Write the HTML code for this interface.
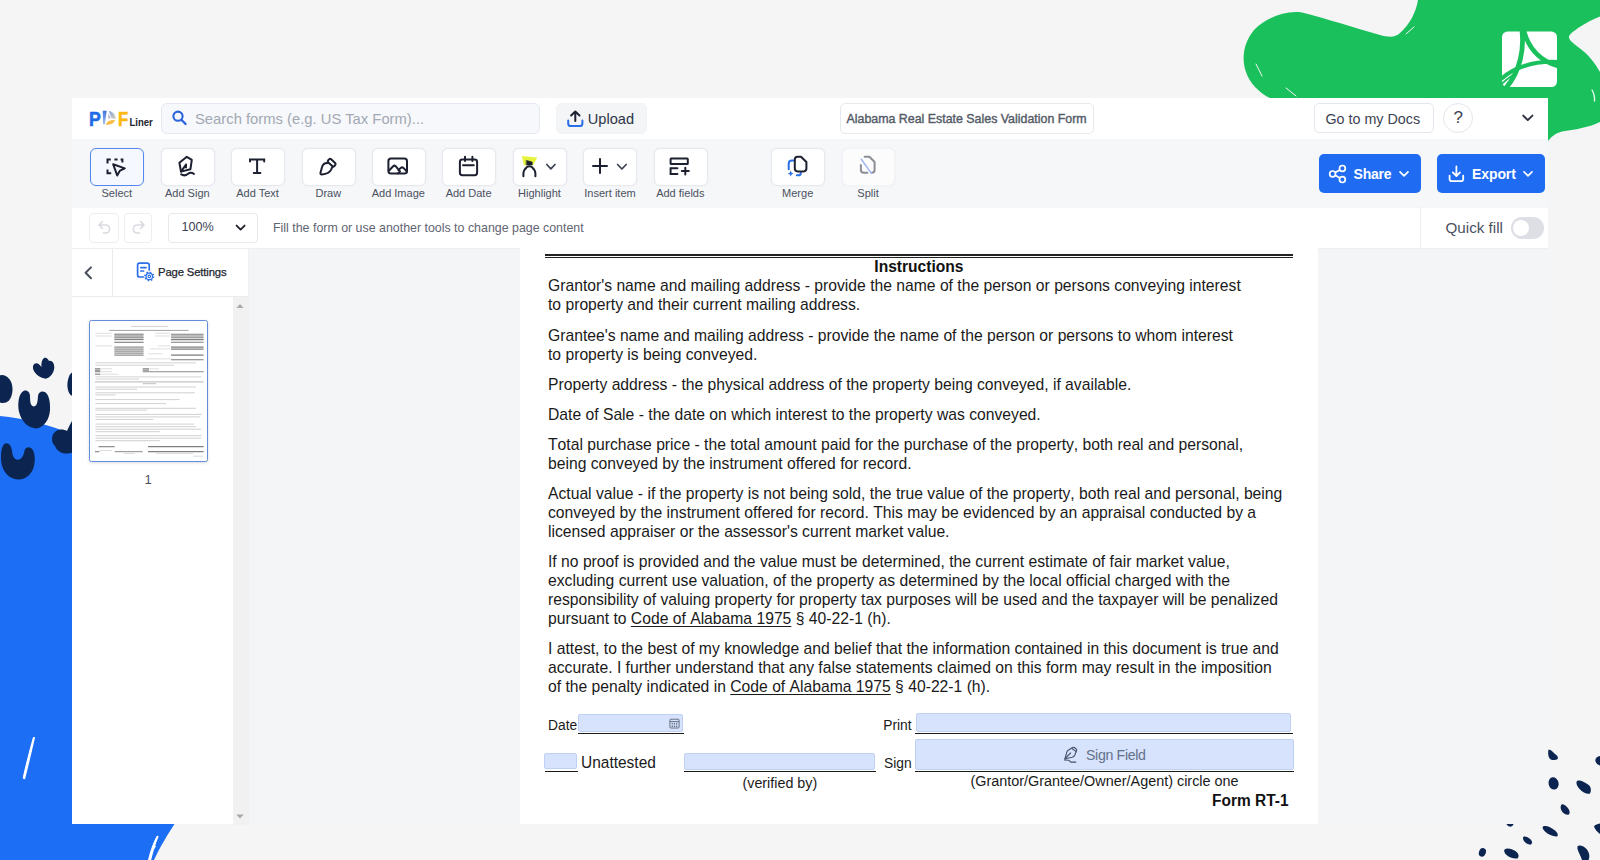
<!DOCTYPE html>
<html lang="en">
<head>
<meta charset="utf-8">
<title>PDFLiner - Alabama Real Estate Sales Validation Form</title>
<style>
*{box-sizing:border-box;margin:0;padding:0}
html,body{width:1600px;height:860px;overflow:hidden}
body{background:#f5f5f5;font-family:"Liberation Sans",sans-serif;color:#3b4252;position:relative}
.abs{position:absolute}
#bg{position:absolute;left:0;top:0;width:1600px;height:860px}
#win{position:absolute;left:71.5px;top:97.5px;width:1476.5px;height:726.5px;background:#f3f5f7;overflow:hidden}
#hdr{position:absolute;left:71.5px;top:97.5px;width:1476.5px;height:41.5px;background:#fff}
#tb{position:absolute;left:71.5px;top:139px;width:1476.5px;height:68px;background:#f6f7f9}
#sub{position:absolute;left:71.5px;top:207.5px;width:1476.5px;height:41.5px;background:#fff;border-bottom:1px solid #eceef1}
.t{position:absolute;white-space:nowrap;line-height:1}
.box{position:absolute;border:1px solid #e4e7ec;border-radius:5px;background:#fff}
.tbtn{position:absolute;top:148px;width:54px;height:37.5px;border:1px solid #e7e9ed;border-radius:6px;background:#fff;box-shadow:0 0 2px rgba(30,40,80,.07)}
.tbtn.sel{border:1px solid #5588ee;background:#f5f9ff}
.tlbl{position:absolute;top:187.4px;width:90px;text-align:center;font-size:11px;color:#4a5160;line-height:13px}
.tbtn svg{position:absolute;left:-1.2px;top:-0.8px}

#page{position:absolute;left:520px;top:248px;width:798px;height:576px;background:#fff}
.p{position:absolute;left:548px;width:760px;font-size:15.69px;line-height:19px;color:#1a1a1a;white-space:nowrap;font-kerning:none}
.u{text-decoration:underline;text-decoration-thickness:1px;text-underline-offset:2px}
.fld{position:absolute;background:#d7e3fc;border:1px solid #bfd0f5;border-radius:2px}
.ln{position:absolute;height:1.5px;background:#1a1a1a}
.d{position:absolute;white-space:nowrap;line-height:1;color:#1a1a1a}
</style>
</head>
<body>
<svg id="bg" viewBox="0 0 1600 860">
<!-- green blob -->
<path d="M1418 0 C1416 12 1410 24 1400 33 C1395 38 1388 37 1380 35 C1355 28 1328 19 1302 12.5 C1285 10 1266 18 1254 30 C1244 42 1241 58 1246 72 C1250 84 1260 94 1274 100 L1548 100 L1548 141 C1552 136 1556 133 1562 131.5 C1574 130 1590 127 1600 122 L1600 72 C1595 63 1588 54 1578 47 C1573 43 1569 40 1569 37 C1569 34 1573 32 1578 28 C1586 23 1593 19 1600 16.5 L1600 0 Z" fill="#19c05c"/>
<path d="M1256 64 L1262 76 M1286 88 L1296 96 M1406 34 L1414 27" stroke="#f5f5f5" stroke-width="1" stroke-linecap="round" fill="none"/>
<path d="M1592 90 Q1595 95 1594.5 101" stroke="#e9f7ee" stroke-width="1.4" stroke-linecap="round" fill="none"/>
<!-- pdf icon -->
<rect x="1502" y="31.6" width="55" height="55.4" rx="5.5" fill="#fff"/>
<g fill="none" stroke="#19c05c" stroke-linecap="butt">
<path d="M1522 31 C1524 48 1521 70 1506 88" stroke-width="4.8"/>
<path d="M1524 31 C1528 46 1538 60 1558 66" stroke-width="4.6"/>
<path d="M1501 79 C1516 66 1536 61 1558 62" stroke-width="4"/>
<path d="M1501.5 84 C1506 80 1511 76 1516 73" stroke-width="2"/>
</g>
<!-- blue blob -->
<path d="M0 416 C24 418 50 425 72 434 L72 824 L174.5 824 C168 834 160 847 154 860 L0 860 Z" fill="#1c6ef5"/>
<path d="M34.4 737.5 Q30 757 24.6 778.5 Q23.2 779 23.6 776.5 Q28 757 33.4 737.8 Z" fill="#fff" stroke="#fff" stroke-width="1.2" stroke-linejoin="round"/>
<path d="M158 836.5 Q154 846 150.5 860 L148.6 860 Q152 846 157.2 836.4 Z M153 850 L155.6 846" fill="#fff" stroke="#fff" stroke-width="1.2" stroke-linejoin="round"/>
<!-- navy blobs left -->
<g fill="#0b2550">
<path d="M44 358 C46 357 48 358.5 49 361 C52 360 54.5 363.5 54.3 367.5 C54 373 50 378 45.5 378.7 C41 378 35.5 375 33.5 370 C32 366 34 362.5 37.5 363.5 C39 364 40.5 365.5 41.5 367 C41 363 42 359.5 44 358 Z"/>
<path d="M0 375.5 C4 374 9 377 11.5 383 C13.5 389 12.5 396 9 400.5 C6.5 403 3 403.6 0 402.5 Z"/>
<path d="M23.5 391 C27 389.5 29.8 392 30 396 C30.2 401 30 406 33.8 406.4 C37.8 406 37.6 400 38 396 C38.5 392 41.5 390.5 45 392 C49 394.5 50.4 402 50 410 C49.5 419 44.5 427 37 428.4 C28 428.6 21 421 18.8 411 C17.5 402 19 393.5 23.5 391 Z"/>
<path d="M72 372.6 C69.5 374 67.5 379 67.4 385 C67.4 390 69 394.5 72 395.8 Z"/>
<path d="M72 421 C70 424 68.5 428 67 431 C63 428.5 57 429 54 433 C51 437 51.5 443 55 446 C57 451 62 454 67 453.5 C69 453.5 70.5 453.2 72 452.8 Z"/>
<path d="M5 443.5 C9 442.6 11.5 446 12 451 C12.6 456 14 459.5 18 459.8 C22 459.5 23.6 455 24.4 451 C25.2 447.5 28 446.4 31 448 C35 451 35.6 459 34 466 C32 474 26 479.5 19 479.5 C10 479.5 3 473 1.4 463 C0.4 455 1.2 445.5 5 443.5 Z"/>
</g>
<!-- navy dots right bottom -->
<g fill="#0b2550">
<path d="M1548.6 749.5 C1551 749.5 1553 752 1555 754 C1557.5 755.5 1558.6 757.5 1557.6 759 C1555.5 760.5 1551.5 760.6 1549.6 758.6 C1548 756 1547.8 752 1548.6 749.5 Z"/>
<path d="M1600 756 C1597 756.5 1595 758.5 1595.4 761 C1596 763.5 1598 765 1600 765.6 Z"/>
<ellipse cx="1553.6" cy="783.4" rx="5" ry="6.2" transform="rotate(-12 1553.6 783.4)"/>
<path d="M1577 781 C1580 779.5 1584 782 1588 784.5 C1591 786.5 1591.6 790 1590 793.6 C1587 794.6 1582.6 792.4 1579.6 789 C1577 786 1575.6 783 1577 781 Z"/>
<path d="M1561.6 804.5 C1563.6 803.5 1566.6 806 1568.6 809 C1570 811.5 1570 814 1568.4 814.8 C1565.6 815 1562.4 813 1561.2 810 C1560.4 808 1560.4 805.6 1561.6 804.5 Z"/>
<path d="M1506.5 824 L1513.5 824 C1513 826 1511 827 1509.6 826.6 C1508 826.2 1506.8 825.2 1506.5 824 Z"/>
<path d="M1543 826.5 C1546 825 1551 827.5 1555 830.5 C1558 833 1558.6 836 1556.6 836.4 C1553 836.6 1548 834.5 1545 831.5 C1543 829.5 1542 827.5 1543 826.5 Z"/>
<path d="M1600 823.5 C1597 824 1594.4 825 1594 826.5 C1595 829.5 1597.6 832.5 1600 834 Z"/>
<path d="M1523.4 837 C1525 835.8 1528 837.4 1530.6 839.4 C1532.4 841 1532.4 843 1531 844.6 C1529 845 1526 843.6 1524.4 841.6 C1523 839.8 1522.6 838 1523.4 837 Z"/>
<ellipse cx="1482.4" cy="852.4" rx="3.4" ry="4.4" transform="rotate(20 1482.4 852.4)"/>
<path d="M1504.6 849.5 C1507 847.5 1512 848.8 1516 851.6 C1518.6 853.6 1519.4 856.4 1517.6 858.4 C1514 859 1509 857.6 1506 854.6 C1504.4 852.8 1503.6 850.8 1504.6 849.5 Z"/>
<path d="M1577.6 846 C1580 844.6 1584 846 1587 849.6 C1589.6 853 1590 857 1588.6 860 L1582 860 C1580.6 856 1578 851.4 1577.4 848.6 Z"/>
</g>
</svg>
<div id="win"></div>
<div id="hdr"></div>
<div id="tb"></div>
<div id="sub"></div>
<!--HEADER-->
<svg class="abs" style="left:86px;top:104px" width="72" height="28" viewBox="86 104 72 28">
  <text x="89" y="125.7" font-family="Liberation Sans, sans-serif" font-weight="bold" font-size="21.1" fill="#1f6ae6" stroke="#1f6ae6" stroke-width="0.6" stroke-linejoin="round" textLength="11.8" lengthAdjust="spacingAndGlyphs">P</text>
  <defs><linearGradient id="lg1" x1="0" y1="0" x2="0" y2="1"><stop offset="0" stop-color="#3d72dc"/><stop offset="1" stop-color="#a9c2f2"/></linearGradient><linearGradient id="lg2" x1="0" y1="0" x2="1" y2="1"><stop offset="0" stop-color="#7fa3e6"/><stop offset="1" stop-color="#dccfae"/></linearGradient></defs>
  <path d="M102.8 110.8 L106.7 110.8 L104.9 124.3 L103 124.3 Z" fill="url(#lg1)"/>
  <path d="M108.2 113.4 L111 118 L108.2 118.8 Z" fill="#b7bfcb"/>
  <path d="M108.7 110.9 C112.6 111.4 115.7 114.6 115.7 118.9 L111.6 118.3 Z" fill="url(#lg2)"/>
  <path d="M105.6 124.4 C107.4 121 111 119.6 114.9 120.1 C114.4 123.2 110.4 125.8 105.6 124.4 Z" fill="#f6bc46"/>
  <text x="117.9" y="125.7" font-family="Liberation Sans, sans-serif" font-weight="bold" font-size="21.1" fill="#fdb913" stroke="#fdb913" stroke-width="0.6" stroke-linejoin="round" textLength="10.2" lengthAdjust="spacingAndGlyphs">F</text>
  <text x="129.4" y="125.9" font-family="Liberation Sans, sans-serif" font-weight="bold" font-size="10.4" fill="#23262f" textLength="23.4" lengthAdjust="spacingAndGlyphs">Liner</text>
</svg>
<div class="box" style="left:161px;top:103.2px;width:379px;height:30.6px;background:#f6f8fc;border-color:#e3e8f1;border-radius:6px"></div>
<svg class="abs" style="left:170px;top:108px" width="20" height="20" viewBox="0 0 20 20"><circle cx="8" cy="8.2" r="4.6" fill="none" stroke="#2a63dc" stroke-width="2.1"/><path d="M11.4 11.7 L15.6 16" stroke="#2a63dc" stroke-width="2.3" stroke-linecap="round"/></svg>
<div class="t" style="left:195px;top:111.9px;font-size:14.8px;color:#a3a8b3">Search forms (e.g. US Tax Form)...</div>
<div class="box" style="left:556px;top:102.5px;width:90.5px;height:31.5px;background:#f4f5f7;border-color:#f2f3f5;border-radius:6px"></div>
<svg class="abs" style="left:565px;top:108px" width="20" height="20" viewBox="0 0 20 20" fill="none" stroke-width="2" stroke-linecap="round" stroke-linejoin="round"><path d="M3.2 12.4 V15.4 Q3.2 18.1 5.9 18.1 H14.7 Q17.4 18.1 17.4 15.4 V12.4" stroke="#2a6fe8"/><path d="M10.3 13 V3.9 M6.1 7.5 L10.3 3.5 L14.5 7.5" stroke="#1d2233"/></svg>
<div class="t" style="left:587.8px;top:111.8px;font-size:14.6px;color:#2b3445">Upload</div>
<div class="box" style="left:840px;top:103px;width:254px;height:30.5px;border-color:#e6e9ee;border-radius:5px"></div>
<div class="t" style="left:846.5px;top:112.6px;font-size:12.4px;color:#555b68;-webkit-text-stroke:0.4px #555b68">Alabama Real Estate Sales Validation Form</div>
<div class="box" style="left:1313.5px;top:103.3px;width:120px;height:30.2px;border-color:#e3e7ee;border-radius:5px"></div>
<div class="t" style="left:1325.5px;top:111.7px;font-size:14.3px;color:#3b4252">Go to my Docs</div>
<div class="abs" style="left:1443.2px;top:103.2px;width:30.2px;height:30.2px;border:1px solid #e3e6ec;border-radius:50%;background:#fff"></div>
<div class="t" style="left:1453.5px;top:109px;font-size:17px;color:#3b4252">?</div>
<svg class="abs" style="left:1520px;top:112px" width="16" height="12" viewBox="0 0 16 12" fill="none" stroke="#2b3040" stroke-width="1.9" stroke-linecap="round" stroke-linejoin="round"><path d="M3.2 3.6 L7.8 8.2 L12.4 3.6"/></svg>
<!--TOOLBAR-->
<div class="tbtn sel" style="left:89.5px;width:54px"><svg width="54" height="37" viewBox="0 0 54 37" fill="none" stroke="#1d2030" stroke-width="2" stroke-linecap="round" stroke-linejoin="round"><path d="M18.5 15.4 V11.6 H21.8 M25.4 11.6 H28.6 M31.6 11.6 H33.4 V14.4 M18.5 21.5 V25.2 H22.2" stroke-linecap="butt" stroke-linejoin="miter"/><path d="M24.2 16.3 L35.8 20.4 L31 22.6 L28.2 27.4 Z"/></svg></div>
<div class="tlbl" style="left:71.8px">Select</div>
<div class="tbtn " style="left:160.5px;width:54px"><svg width="54" height="37" viewBox="0 0 54 37" fill="none" stroke="#1d2030" stroke-width="2" stroke-linecap="round" stroke-linejoin="round"><path d="M26.8 8.8 L31.8 11.8 L30.4 21.3 L21 23.6 L19.4 14.8 Z"/><path d="M21 23.6 L26 16.6 M26 16.6 V19.4"/><path d="M21.2 26.4 C23.5 27.8 25.8 27.6 27.8 26 C29.8 24.4 32 24.4 34 26"/></svg></div>
<div class="tlbl" style="left:142.3px">Add Sign</div>
<div class="tbtn " style="left:230.5px;width:54px"><svg width="54" height="37" viewBox="0 0 54 37" fill="none" stroke="#1d2030" stroke-width="2" stroke-linecap="round" stroke-linejoin="round"><path d="M20 13.6 V11.5 H34.2 V13.6 M27.1 11.5 V25 M23.8 25 H30.4" stroke-linejoin="miter"/></svg></div>
<div class="tlbl" style="left:212.60000000000002px">Add Text</div>
<div class="tbtn " style="left:301.5px;width:54px"><svg width="54" height="37" viewBox="0 0 54 37" fill="none" stroke="#1d2030" stroke-width="2" stroke-linecap="round" stroke-linejoin="round"><rect x="-4.2" y="-2.1" width="8.4" height="4.2" rx="1.5" transform="translate(30.7 14.7) rotate(43)"/><path d="M26.4 14.9 C23.6 14.8 21.6 16.6 20.9 19.4 L19.5 24.8 Q19.1 26.5 20.9 26.4 C25.2 26.2 28.6 25 30.3 21.4 L31.1 19.4"/></svg></div>
<div class="tlbl" style="left:283.3px">Draw</div>
<div class="tbtn " style="left:371.5px;width:54px"><svg width="54" height="37" viewBox="0 0 54 37" fill="none" stroke="#1d2030" stroke-width="2" stroke-linecap="round" stroke-linejoin="round"><rect x="17.4" y="10.6" width="18.6" height="15" rx="2.6"/><path d="M17.8 22.8 L22.2 18.2 Q23.4 17 24.6 18.2 L29 23.4 M27.4 22 L30 19.8 Q31.2 18.9 32.4 19.9 L36 23.6 M29 23.4 L27 25.4"/></svg></div>
<div class="tlbl" style="left:353.3px">Add Image</div>
<div class="tbtn " style="left:442px;width:54px"><svg width="54" height="37" viewBox="0 0 54 37" fill="none" stroke="#1d2030" stroke-width="2" stroke-linecap="round" stroke-linejoin="round"><rect x="17.9" y="11.6" width="17.2" height="15.6" rx="2.4"/><path d="M23 8.8 V13 M30.4 8.8 V13 M21 17.2 H31.8"/></svg></div>
<div class="tlbl" style="left:423.6px">Add Date</div>
<div class="tbtn " style="left:512.5px;width:54px"><svg width="54" height="37" viewBox="0 0 54 37" fill="none" stroke="#1d2030" stroke-width="2" stroke-linecap="round" stroke-linejoin="round"><path d="M9.8 8 L25.2 9.4 L21.2 17.2 H12 Z" fill="#e6f23c" stroke="none"/><path d="M14.6 12.5 L20.2 14 V16.9 H14.6 Z" fill="#1d2030" stroke="#1d2030" stroke-width="0.6" stroke-linejoin="round"/><path d="M11.4 28.2 V25.6 C11.4 23.4 13 20.6 15 18.9 Q17.4 17.6 19.8 18.9 C21.8 20.6 23.4 23.4 23.4 25.6 V28.2"/><path d="M34.8 16.5 L38.9 20.8 L43 16.5" stroke="#3b4252" stroke-width="1.7"/></svg></div>
<div class="tlbl" style="left:494.5px">Highlight</div>
<div class="tbtn " style="left:583px;width:54px"><svg width="54" height="37" viewBox="0 0 54 37" fill="none" stroke="#1d2030" stroke-width="2" stroke-linecap="round" stroke-linejoin="round"><path d="M10 18 H24 M17 11 V25"/><path d="M34.6 16.5 L38.9 21 L43.2 16.5" stroke="#3b4252" stroke-width="1.7"/></svg></div>
<div class="tlbl" style="left:565px">Insert item</div>
<div class="tbtn " style="left:653.5px;width:54px"><svg width="54" height="37" viewBox="0 0 54 37" fill="none" stroke="#1d2030" stroke-width="2" stroke-linecap="round" stroke-linejoin="round"><rect x="17.6" y="10.6" width="17.2" height="5.4" rx="0.6"/><path d="M24.4 20.3 H17.6 V26 H24.4 M28.8 23 H35.8 M32.3 19.8 V26.4" stroke-linejoin="miter"/></svg></div>
<div class="tlbl" style="left:635.3px">Add fields</div>
<div class="tbtn " style="left:771px;width:54px"><svg width="54" height="37" viewBox="0 0 54 37" fill="none" stroke="#1d2030" stroke-width="2" stroke-linecap="round" stroke-linejoin="round"><path d="M22.8 12.5 H21 Q17.7 12.5 17.7 15.8 V21.2 M25.8 27.3 H27.4 Q29.8 27.3 29.8 24.9" stroke="#2a6fe8"/><path d="M19.7 22.6 L20.6 24.7 L22.7 25.6 L20.6 26.5 L19.7 28.6 L18.8 26.5 L16.7 25.6 L18.8 24.7 Z" fill="#2a6fe8" stroke="none"/><path d="M26.6 8.7 H30 L35.4 14 V20.6 Q35.4 23.4 32.6 23.4 H26.6 Q23.8 23.4 23.8 20.6 V11.5 Q23.8 8.7 26.6 8.7 Z"/></svg></div>
<div class="tlbl" style="left:752.7px">Merge</div>
<div class="tbtn" style="left:841.5px;width:53px;border-color:#f3f4f6;background:#fcfcfd"><svg width="54" height="37" viewBox="0 0 54 37" fill="none" stroke="#1d2030" stroke-width="2" stroke-linecap="round" stroke-linejoin="round"><path d="M23.6 8.7 H28.4 L33.6 14 V22 Q33.6 24.8 30.8 24.8 H30.6 M19.9 17 V22 Q19.9 24.8 22.7 24.8 H26.4" stroke="#8b8e96"/><path d="M20.3 11.2 L30.4 25.4" stroke="#a3b8f2" stroke-width="1.6"/></svg></div>
<div class="tlbl" style="left:823px">Split</div>
<div class="abs" style="left:1318.5px;top:154px;width:102px;height:39px;border-radius:5px;background:#1f6cf2"></div>
<svg class="abs" style="left:1327px;top:163px" width="22" height="22" viewBox="0 0 22 22" fill="none" stroke="#fff" stroke-width="1.7"><circle cx="5.6" cy="10.9" r="2.9"/><circle cx="15.4" cy="5.4" r="2.9"/><circle cx="15.4" cy="16.6" r="2.9"/><path d="M8.2 9.5 L12.8 6.9 M8.2 12.3 L12.8 15.1"/></svg>
<div class="t" style="left:1353.5px;top:166.6px;font-size:14px;font-weight:bold;color:#fff;letter-spacing:-0.2px">Share</div>
<svg class="abs" style="left:1397px;top:167.9px" width="14" height="12" viewBox="0 0 14 12" fill="none" stroke="#fff" stroke-width="1.7" stroke-linecap="round" stroke-linejoin="round"><path d="M3 3.8 L7 7.8 L11 3.8"/></svg>
<div class="abs" style="left:1436.5px;top:154px;width:108px;height:39px;border-radius:5px;background:#1f6cf2"></div>
<svg class="abs" style="left:1446px;top:163px" width="22" height="22" viewBox="0 0 22 22" fill="none" stroke="#fff" stroke-width="1.8" stroke-linecap="round" stroke-linejoin="round"><path d="M10.4 3.4 V12.6 M6.8 9.4 L10.4 13 L14 9.4 M3.6 12.6 V16 Q3.6 18.2 5.8 18.2 H15 Q17.2 18.2 17.2 16 V12.6"/></svg>
<div class="t" style="left:1472px;top:166.6px;font-size:14px;font-weight:bold;color:#fff;letter-spacing:-0.1px">Export</div>
<svg class="abs" style="left:1520.5px;top:167.9px" width="14" height="12" viewBox="0 0 14 12" fill="none" stroke="#fff" stroke-width="1.7" stroke-linecap="round" stroke-linejoin="round"><path d="M3 3.8 L7 7.8 L11 3.8"/></svg>
<!--SUBBAR-->
<div class="box" style="left:89px;top:213px;width:29.5px;height:29.5px;border-color:#eceef2;border-radius:4px"></div>
<svg class="abs" style="left:89.5px;top:213px" width="29" height="30" viewBox="0 0 29 30" fill="none" stroke="#d9dbe0" stroke-width="1.6" stroke-linecap="round" stroke-linejoin="round"><path d="M12.4 8.6 L9 12 L12.4 15.4 M9.4 12 H15.6 Q19.6 12 19.6 16 Q19.6 20 15.6 20 H13.4"/></svg>
<div class="box" style="left:123.5px;top:213px;width:28.5px;height:29.5px;border-color:#eceef2;border-radius:4px"></div>
<svg class="abs" style="left:123.5px;top:213px" width="29" height="30" viewBox="0 0 29 30" fill="none" stroke="#d9dbe0" stroke-width="1.6" stroke-linecap="round" stroke-linejoin="round"><path d="M16.6 8.6 L20 12 L16.6 15.4 M19.6 12 H13.4 Q9.4 12 9.4 16 Q9.4 20 13.4 20 H15.6"/></svg>
<div class="box" style="left:168px;top:213px;width:89.5px;height:29.5px;border-color:#e6e9ee;border-radius:4px"></div>
<div class="t" style="left:181.5px;top:221px;font-size:12.6px;color:#3b4252">100%</div>
<svg class="abs" style="left:233px;top:221px" width="16" height="14" viewBox="0 0 16 14" fill="none" stroke="#23262f" stroke-width="1.9" stroke-linecap="round" stroke-linejoin="round"><path d="M3.6 4.6 L7.6 8.6 L11.6 4.6"/></svg>
<div class="t" style="left:273px;top:221.5px;font-size:12.4px;color:#5f6572">Fill the form or use another tools to change page content</div>
<div class="abs" style="left:1420px;top:207px;width:1px;height:41px;background:#eceef1"></div>
<div class="t" style="left:1445.5px;top:220px;font-size:15.2px;color:#4a5160">Quick fill</div>
<div class="abs" style="left:1511px;top:216.8px;width:33px;height:22px;border-radius:11px;background:#dddfe5"></div>
<div class="abs" style="left:1513.2px;top:219.8px;width:16px;height:16px;border-radius:50%;background:#fff"></div>
<!--SIDEBAR-->
<div class="abs" style="left:71.5px;top:249px;width:176.5px;height:575px;background:#fff"></div>
<div class="abs" style="left:71.5px;top:295.5px;width:176.5px;height:1px;background:#e9ebee"></div>
<div class="abs" style="left:112px;top:249px;width:1px;height:47px;background:#e9ebee"></div>
<div class="abs" style="left:232.5px;top:296.5px;width:15.5px;height:528px;background:#f1f1f1"></div>
<div class="abs" style="left:248px;top:249px;width:1px;height:575px;background:#eef0f2"></div>
<svg class="abs" style="left:80px;top:262px" width="16" height="22" viewBox="0 0 16 22" fill="none" stroke="#4a4f5c" stroke-width="2" stroke-linecap="round" stroke-linejoin="round"><path d="M11 5.4 L5.6 10.8 L11 16.2"/></svg>
<svg class="abs" style="left:134px;top:260px" width="24" height="24" viewBox="0 0 24 24" fill="none" stroke="#2a6fe8" stroke-width="1.7" stroke-linecap="round" stroke-linejoin="round"><path d="M9.6 17 H5.6 Q3.6 17 3.6 15 V5.2 Q3.6 3.2 5.6 3.2 H13.2 Q15.2 3.2 15.2 5.2 V10"/><path d="M6.8 7.6 H12 M6.8 11 H9.6"/><circle cx="15.3" cy="16.4" r="4.3" stroke-width="1.5" stroke-dasharray="1.5 1.877" stroke-linecap="butt"/><circle cx="15.3" cy="16.4" r="3.2" stroke-width="1.2" fill="#fff"/><circle cx="15.3" cy="16.4" r="1.25" stroke-width="1.1"/></svg>
<div class="t" style="left:158px;top:266.5px;font-size:11.3px;color:#23262f;letter-spacing:-0.15px;-webkit-text-stroke:0.25px #23262f">Page Settings</div>
<svg class="abs" style="left:234px;top:300px" width="12" height="12" viewBox="0 0 12 12"><path d="M2.4 8 L6 4 L9.6 8 Z" fill="#a8a8a8"/></svg>
<svg class="abs" style="left:234px;top:810px" width="12" height="12" viewBox="0 0 12 12"><path d="M2.4 4.4 L6 8.4 L9.6 4.4 Z" fill="#a8a8a8"/></svg>
<div class="abs" id="thumb" style="left:89.2px;top:320px;width:119px;height:141.5px;border:1.8px solid #628cdc;border-radius:2.5px;background:#fff;box-shadow:0 1px 3px rgba(0,0,0,.15)"><svg width="118" height="140" viewBox="0 0 118 140" style="position:absolute;left:0;top:0" fill="none"><path d="M40.9 5.4 H77.9" stroke="#c4c4c4" stroke-width="0.8"/><path d="M19.3 9.4 H98.6" stroke="#9a9a9a" stroke-width="0.9"/><path d="M5.4 12.3 H22.0" stroke="#d0d0d0" stroke-width="0.7"/><path d="M64.9 12.3 H80.6" stroke="#d0d0d0" stroke-width="0.7"/><path d="M5.4 15.0 H22.0" stroke="#d0d0d0" stroke-width="0.7"/><path d="M64.9 15.0 H80.6" stroke="#d0d0d0" stroke-width="0.7"/><path d="M24.3 13.2 H53.6" stroke="#7d7d7d" stroke-width="1.1"/><path d="M81.1 13.2 H113.6" stroke="#7d7d7d" stroke-width="1.1"/><path d="M24.3 15.0 H53.6" stroke="#7d7d7d" stroke-width="1.1"/><path d="M81.1 15.0 H113.6" stroke="#7d7d7d" stroke-width="1.1"/><path d="M24.3 16.8 H53.6" stroke="#7d7d7d" stroke-width="1.1"/><path d="M81.1 16.8 H113.6" stroke="#7d7d7d" stroke-width="1.1"/><path d="M24.3 18.6 H53.6" stroke="#7d7d7d" stroke-width="1.1"/><path d="M81.1 18.6 H113.6" stroke="#7d7d7d" stroke-width="1.1"/><path d="M24.3 21.3 H53.6" stroke="#7d7d7d" stroke-width="1.1"/><path d="M81.1 21.3 H113.6" stroke="#7d7d7d" stroke-width="1.1"/><path d="M5.4 24.9 H22.0" stroke="#d0d0d0" stroke-width="0.7"/><path d="M24.3 26.1 H53.6" stroke="#7d7d7d" stroke-width="1.1"/><path d="M24.3 28.1 H53.6" stroke="#7d7d7d" stroke-width="1.1"/><path d="M24.3 30.1 H53.6" stroke="#7d7d7d" stroke-width="1.1"/><path d="M24.3 32.1 H53.6" stroke="#7d7d7d" stroke-width="1.1"/><path d="M24.3 34.1 H53.6" stroke="#7d7d7d" stroke-width="1.1"/><path d="M81.1 26.1 H113.6" stroke="#7d7d7d" stroke-width="1.1"/><path d="M81.1 28.1 H113.6" stroke="#7d7d7d" stroke-width="1.1"/><path d="M81.1 34.1 H113.6" stroke="#7d7d7d" stroke-width="1.1"/><path d="M81.1 38.8 H113.6" stroke="#7d7d7d" stroke-width="1.1"/><path d="M68.0 24.9 H80.6" stroke="#d0d0d0" stroke-width="0.7"/><path d="M59.9 27.9 H80.6" stroke="#d0d0d0" stroke-width="0.7"/><path d="M58.1 32.8 H72.5" stroke="#d0d0d0" stroke-width="0.7"/><path d="M56.3 37.9 H81.5" stroke="#d0d0d0" stroke-width="0.7"/><path d="M5.4 41.8 H105.8" stroke="#c6c6c6" stroke-width="0.8"/><path d="M5.4 44.2 H84.2" stroke="#c6c6c6" stroke-width="0.8"/><path d="M4.9 47.8 H10.3" stroke="#808080" stroke-width="1.1"/><path d="M4.9 49.2 H10.3" stroke="#808080" stroke-width="1.1"/><path d="M4.9 50.7 H10.3" stroke="#808080" stroke-width="1.1"/><path d="M4.9 53.2 H10.3" stroke="#808080" stroke-width="1.1"/><path d="M10.3 47.8 H22.0" stroke="#d0d0d0" stroke-width="0.7"/><path d="M10.3 50.7 H22.0" stroke="#d0d0d0" stroke-width="0.7"/><path d="M10.3 53.2 H28.3" stroke="#d0d0d0" stroke-width="0.7"/><path d="M52.7 47.8 H59.0" stroke="#808080" stroke-width="1.1"/><path d="M52.7 49.2 H59.0" stroke="#808080" stroke-width="1.1"/><path d="M59.0 47.8 H68.9" stroke="#d0d0d0" stroke-width="0.7"/><path d="M52.7 50.7 H113.6" stroke="#8a8a8a" stroke-width="1.1"/><path d="M5.4 55.9 H111.3" stroke="#c6c6c6" stroke-width="0.8"/><path d="M5.4 58.1 H49.0" stroke="#c6c6c6" stroke-width="0.8"/><path d="M4.9 60.9 H113.6" stroke="#a5a5a5" stroke-width="0.8"/><path d="M52.7 62.7 H66.2" stroke="#b0b0b0" stroke-width="0.8"/><path d="M5.4 66.0 H105.8" stroke="#c4c4c4" stroke-width="0.8"/><path d="M5.4 68.2 H47.2" stroke="#c4c4c4" stroke-width="0.8"/><path d="M5.4 71.8 H104.9" stroke="#c4c4c4" stroke-width="0.8"/><path d="M5.4 73.9 H25.6" stroke="#c4c4c4" stroke-width="0.8"/><path d="M5.4 78.6 H89.6" stroke="#c4c4c4" stroke-width="0.8"/><path d="M5.4 82.6 H76.1" stroke="#c4c4c4" stroke-width="0.8"/><path d="M5.4 87.3 H105.8" stroke="#c4c4c4" stroke-width="0.8"/><path d="M5.4 89.1 H57.2" stroke="#c4c4c4" stroke-width="0.8"/><path d="M5.4 93.4 H111.8" stroke="#c4c4c4" stroke-width="0.8"/><path d="M5.4 95.9 H110.3" stroke="#c4c4c4" stroke-width="0.8"/><path d="M5.4 98.4 H63.5" stroke="#c4c4c4" stroke-width="0.8"/><path d="M5.4 103.1 H104.0" stroke="#c4c4c4" stroke-width="0.8"/><path d="M5.4 105.7 H105.8" stroke="#c4c4c4" stroke-width="0.8"/><path d="M5.4 108.2 H111.3" stroke="#c4c4c4" stroke-width="0.8"/><path d="M5.4 110.7 H69.8" stroke="#c4c4c4" stroke-width="0.8"/><path d="M5.4 114.7 H111.8" stroke="#c4c4c4" stroke-width="0.8"/><path d="M5.4 117.2 H111.3" stroke="#c4c4c4" stroke-width="0.8"/><path d="M5.4 119.7 H69.8" stroke="#c4c4c4" stroke-width="0.8"/><path d="M8.5 125.7 H24.7" stroke="#808080" stroke-width="1.1"/><path d="M58.1 125.7 H113.6" stroke="#808080" stroke-width="1.2"/><path d="M4.9 130.7 H9.4" stroke="#808080" stroke-width="1.1"/><path d="M24.7 130.7 H52.7" stroke="#8a8a8a" stroke-width="1.0"/><path d="M58.1 130.7 H113.6" stroke="#808080" stroke-width="1.2"/><path d="M9.4 129.5 H22.0" stroke="#d0d0d0" stroke-width="0.7"/><path d="M33.7 132.5 H44.5" stroke="#cfcfcf" stroke-width="0.7"/><path d="M66.2 132.5 H103.1" stroke="#cfcfcf" stroke-width="0.7"/><path d="M103.1 135.2 H113.1" stroke="#c8c8c8" stroke-width="0.7"/></svg></div>
<div class="t" style="left:144.5px;top:472.5px;font-size:13px;color:#4a4f5c">1</div>
<!--DOC-->
<div id="page"></div>
<div class="abs" style="left:544.5px;top:254.4px;width:748px;height:1.3px;background:#222"></div>
<div class="abs" style="left:544.5px;top:257px;width:748px;height:1.3px;background:#222"></div>
<div class="d" style="left:874.3px;top:258.5px;font-size:15.6px;font-weight:bold;color:#111">Instructions</div>
<div class="p" style="top:275.8px">Grantor's name and mailing address - provide the name of the person or persons conveying interest<br>to property and their current mailing address.</div>
<div class="p" style="top:325.6px">Grantee's name and mailing address - provide the name of the person or persons to whom interest<br>to property is being conveyed.</div>
<div class="p" style="top:374.6px">Property address - the physical address of the property being conveyed, if available.</div>
<div class="p" style="top:404.9px">Date of Sale - the date on which interest to the property was conveyed.</div>
<div class="p" style="top:434.8px">Total purchase price - the total amount paid for the purchase of the property, both real and personal,<br>being conveyed by the instrument offered for record.</div>
<div class="p" style="top:484.2px">Actual value - if the property is not being sold, the true value of the property, both real and personal, being<br>conveyed by the instrument offered for record. This may be evidenced by an appraisal conducted by a<br>licensed appraiser or the assessor's current market value.</div>
<div class="p" style="top:552.1px">If no proof is provided and the value must be determined, the current estimate of fair market value,<br>excluding current use valuation, of the property as determined by the local official charged with the<br>responsibility of valuing property for property tax purposes will be used and the taxpayer will be penalized<br>pursuant to <span class="u">Code of Alabama 1975</span> § 40-22-1 (h).</div>
<div class="p" style="top:639.1px">I attest, to the best of my knowledge and belief that the information contained in this document is true and<br>accurate. I further understand that any false statements claimed on this form may result in the imposition<br>of the penalty indicated in <span class="u">Code of Alabama 1975</span> § 40-22-1 (h).</div>
<div class="d" style="left:548px;top:718.6px;font-size:13.8px">Date</div>
<div class="fld" style="left:578px;top:714.2px;width:104.8px;height:17.6px"></div>
<div class="ln" style="left:577.5px;top:732.9px;width:106.4px"></div>
<svg class="abs" style="left:669px;top:717.5px" width="11" height="11" viewBox="0 0 11 11" fill="none" stroke="#5a6478" stroke-width="0.9"><rect x="0.9" y="1.2" width="9.2" height="8.8" rx="1"/><path d="M0.9 3.6 H10.1"/><path d="M2.6 5.4 H8.6 M2.6 7 H8.6 M2.6 8.5 H8.6" stroke-dasharray="1.3 0.9"/></svg>
<div class="d" style="left:883.2px;top:718.6px;font-size:13.8px">Print</div>
<div class="fld" style="left:916px;top:713px;width:375px;height:19px"></div>
<div class="ln" style="left:915px;top:732.9px;width:378px"></div>
<div class="fld" style="left:544.3px;top:753px;width:33.2px;height:16.2px"></div>
<div class="ln" style="left:544.5px;top:770.6px;width:33px"></div>
<div class="d" style="left:580.6px;top:754.9px;font-size:15.4px;transform:scale(1.006,1.12);transform-origin:0 85%">Unattested</div>
<div class="fld" style="left:684.2px;top:753px;width:191px;height:16.5px"></div>
<div class="ln" style="left:684px;top:770.6px;width:191.5px"></div>
<div class="d" style="left:742.5px;top:775.5px;font-size:14.3px">(verified by)</div>
<div class="d" style="left:884px;top:756.7px;font-size:13.8px">Sign</div>
<div class="fld" style="left:915.3px;top:739.2px;width:378.4px;height:30.9px"></div>
<div class="ln" style="left:915px;top:770.6px;width:378.5px"></div>
<svg class="abs" style="left:1062px;top:745px" width="18" height="20" viewBox="0 0 18 20" fill="none" stroke="#46536b" stroke-width="1.15" stroke-linecap="round" stroke-linejoin="round"><path d="M11.2 2.4 Q11.8 2 12.4 2.5 L14.4 4.2 Q14.9 4.7 14.6 5.4 L12.8 10 Q12 11.8 10.2 12.3 L3 13.7 L4.8 7.2 Q5.2 6 6.2 5.2 L9.4 3.2 Z"/><path d="M3 13.7 L8.6 8 M9.6 3.3 L14.2 6.6"/><path d="M2.4 14.9 L6.6 15.2 Q7.6 15.3 7.8 16.2 Q8 17.1 9 17.1 H13.8"/></svg>
<div class="d" style="left:1086px;top:748px;font-size:14.2px;color:#64718a;letter-spacing:-0.35px">Sign Field</div>
<div class="d" style="left:970.4px;top:774px;font-size:14.42px">(Grantor/Grantee/Owner/Agent) circle one</div>
<div class="d" style="left:1212.3px;top:792.6px;font-size:15.3px;font-weight:bold;color:#111;transform:scale(1.012,1.1);transform-origin:0 85%">Form RT-1</div>
</body>
</html>
